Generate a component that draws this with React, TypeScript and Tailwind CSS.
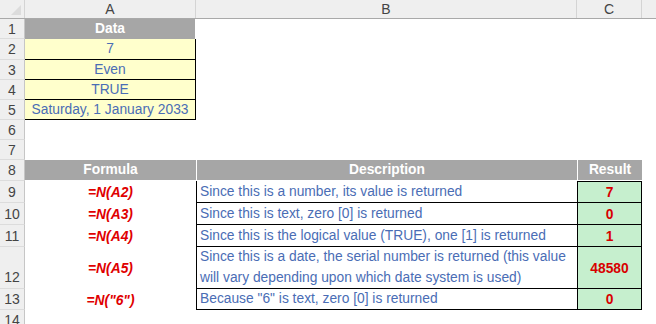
import React from 'react';

const blue = 'text-[#4a6db5]';
const rowHead =
  'w-[25px] shrink-0 bg-[#efefef] border-r border-r-[#c6c6c6] border-b border-b-[#dcdcdc] text-[#444] text-[14px] flex justify-center';

type RowProps = { n: number; h: string; end?: boolean; children?: React.ReactNode };

const Row: React.FC<RowProps> = ({ n, h, end, children }) => (
  <div className={`flex ${h}`}>
    <div className={`${rowHead} ${end ? 'items-end pb-[1px]' : 'items-center'}`}>{n}</div>
    {children}
  </div>
);

const data = ['7', 'Even', 'TRUE', 'Saturday, 1 January 2033'];

const examples = [
  { f: '=N(A2)', d: 'Since this is a number, its value is returned', r: '7', h: 'h-[22px]' },
  { f: '=N(A3)', d: 'Since this is text, zero [0] is returned', r: '0', h: 'h-[22px]' },
  { f: '=N(A4)', d: 'Since this is the logical value (TRUE), one [1] is returned', r: '1', h: 'h-[22px]' },
  {
    f: '=N(A5)',
    d: 'Since this is a date, the serial number is returned (this value\nwill vary depending upon which date system is used)',
    r: '48580',
    h: 'h-[42px]',
  },
  { f: '=N("6")', d: 'Because "6" is text, zero [0] is returned', r: '0', h: 'h-[21px]' },
];

export default function App() {
  return (
    <div className="w-[656px] h-[324px] overflow-hidden bg-white font-['Liberation_Sans',Arial,sans-serif] text-[13.8px] leading-[20px]">
      {/* column headers */}
      <div className="flex h-[19px] bg-[#efefef] border-b border-b-[#a9a9a9] text-[#444] text-[14px]">
        <div className="w-[25px] shrink-0 border-r border-r-[#d4d4d4] flex items-end justify-end pr-[3px] pb-[3px]">
          <svg width="10" height="10" viewBox="0 0 10 10">
            <polygon points="10,0 10,10 0,10" fill="#dcdcdc" />
          </svg>
        </div>
        <div className="w-[171px] shrink-0 border-r border-r-[#d4d4d4] flex items-center justify-center">A</div>
        <div className="w-[381px] shrink-0 border-r border-r-[#d4d4d4] flex items-center justify-center">B</div>
        <div className="w-[65px] shrink-0 border-r border-r-[#d4d4d4] flex items-center justify-center">C</div>
        <div className="flex-1" />
      </div>

      <Row n={1} h="h-[20px]">
        <div className="w-[170px] shrink-0 bg-[#a6a6a6] text-white font-bold flex items-center justify-center">Data</div>
      </Row>
      {data.map((v, i) => (
        <Row key={v} n={i + 2} h={i === 0 ? 'h-[21px]' : 'h-[20px]'}>
          <div className={`w-[171px] shrink-0 bg-[#ffffcc] border-r border-b border-black flex items-center justify-center ${blue}`}>
            {v}
          </div>
        </Row>
      ))}
      <Row n={6} h="h-[20px]" />
      <Row n={7} h="h-[20px]" />
      <Row n={8} h="h-[21px]">
        <div className="w-[171px] shrink-0 bg-[#a6a6a6] text-white font-bold flex items-center justify-center border-b border-b-white">
          Formula
        </div>
        <div className="w-[381px] shrink-0 bg-[#a6a6a6] text-white font-bold flex items-center justify-center border-l border-white border-b border-b-white">
          Description
        </div>
        <div className="w-[65px] shrink-0 bg-[#a6a6a6] text-white font-bold flex items-center justify-center border-l border-white border-b border-b-white">
          Result
        </div>
      </Row>
      {examples.map((e, i) => (
        <Row key={e.f} n={i + 9} h={e.h} end={i === 3}>
          <div className="w-[171px] shrink-0 flex items-center justify-center pt-[2px] text-[#e00000] font-bold italic">{e.f}</div>
          <div className={`w-[381px] shrink-0 border-l border-b border-black pl-[3px] flex items-end whitespace-pre-line leading-[21px] ${blue}`}>
            {e.d}
          </div>
          <div
            className={`w-[65px] shrink-0 bg-[#c6efce] border-l border-r border-b border-black flex items-center justify-center pt-[2px] text-[#d80000] font-bold ${
              i === 0 ? 'border-t' : ''
            }`}
          >
            {e.r}
          </div>
        </Row>
      ))}
      <Row n={14} h="h-[20px]" />
    </div>
  );
}
